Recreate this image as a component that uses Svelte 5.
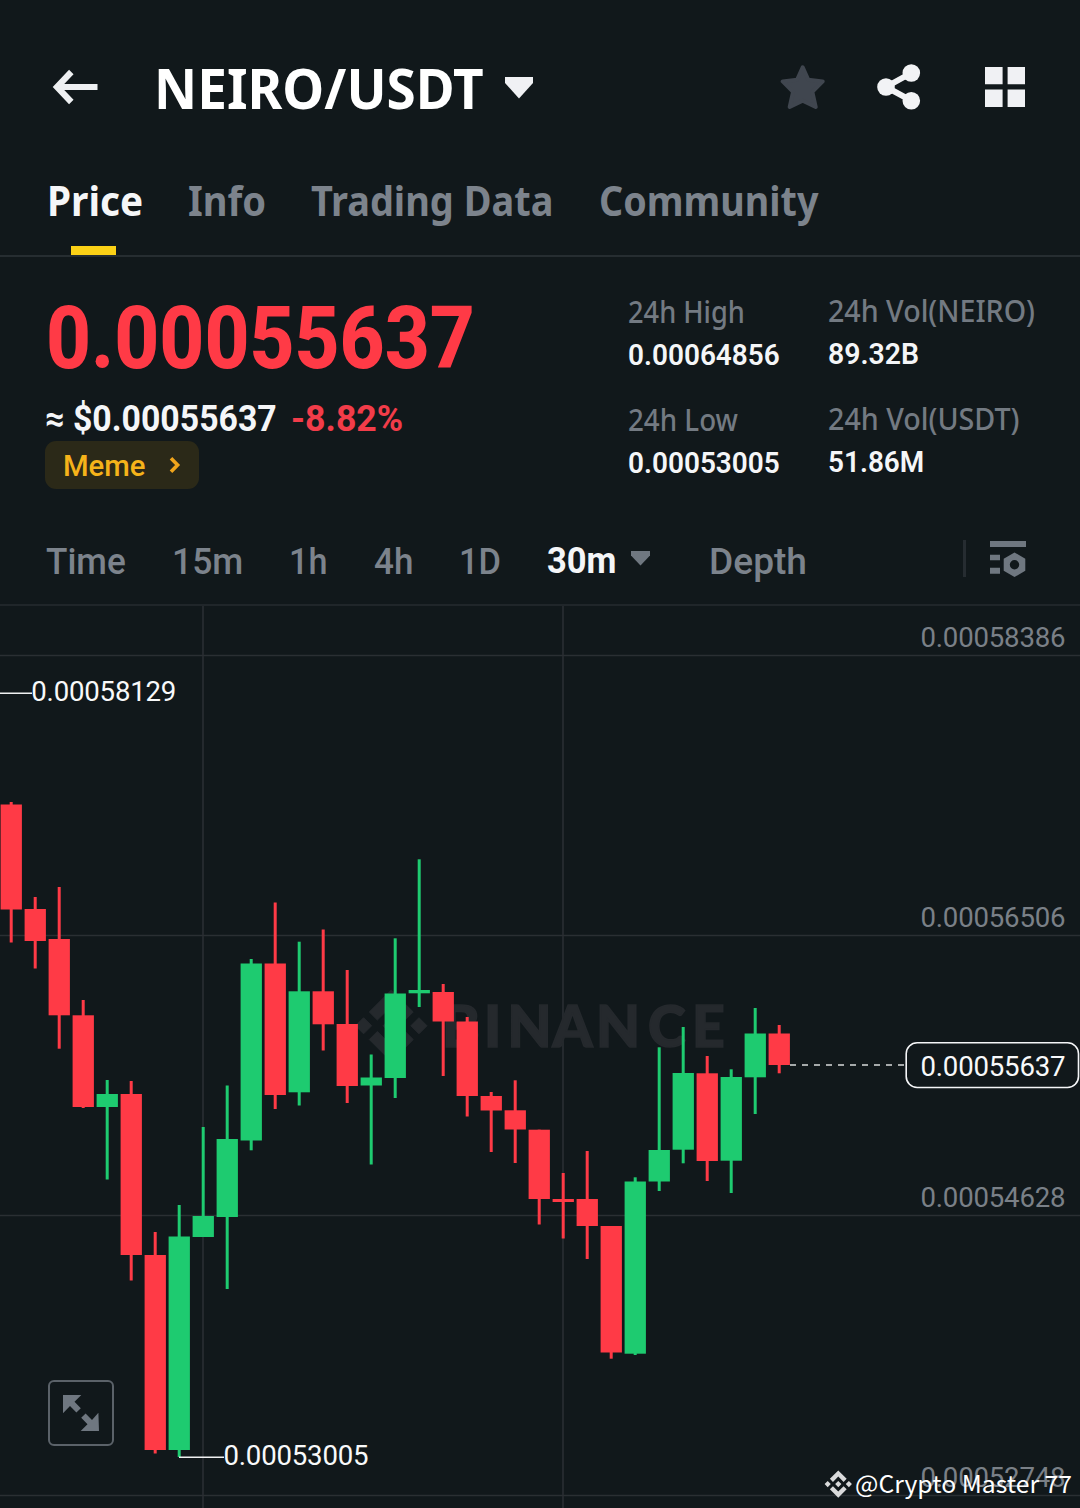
<script lang="ts">
  type Candle = [string, number, number, number, number];

  const tabs = [
    { label: 'Price', width: 96 },
    { label: 'Info', width: 78 },
    { label: 'Trading Data', width: 242 },
    { label: 'Community', width: 219 }
  ];

  const stats = [
    { label: '24h High', width: 117, value: '0.00064856', valueWidth: 152 },
    { label: '24h Vol(NEIRO)', width: 207, value: '89.32B', valueWidth: 91 },
    { label: '24h Low', width: 110, value: '0.00053005', valueWidth: 152 },
    { label: '24h Vol(USDT)', width: 191, value: '51.86M', valueWidth: 96 }
  ];

  const intervals = [
    { label: 'Time', width: 80 },
    { label: '15m', width: 71 },
    { label: '1h', width: 38 },
    { label: '4h', width: 39 },
    { label: '1D', width: 42 }
  ];

  const levels = [
    { price: '0.00058386', y: 655.5 },
    { price: '0.00056506', y: 935.5 },
    { price: '0.00054628', y: 1215.5 },
    { price: '0.00052748', y: 1495.5 }
  ];

  // direction, high, body top, body bottom, low
  const candles: Candle[] = [
    ['down', 802, 804.5, 909.5, 942.5],
    ['down', 897, 909, 941, 968.5],
    ['down', 887, 939, 1015.3, 1048.7],
    ['down', 1000, 1015.3, 1107, 1108],
    ['up', 1080, 1094, 1107, 1179.5],
    ['down', 1081, 1094, 1255, 1280.5],
    ['down', 1232, 1255, 1450, 1453.5],
    ['up', 1205, 1236.5, 1450, 1457],
    ['up', 1127, 1216, 1237, 1237],
    ['up', 1085.5, 1139, 1217, 1289],
    ['up', 959, 963.5, 1140.5, 1150.3],
    ['down', 902.5, 963.5, 1095, 1109],
    ['up', 941.7, 991.3, 1092.3, 1105.5],
    ['down', 929.5, 991.3, 1024.3, 1050.5],
    ['down', 970, 1024, 1086, 1103],
    ['up', 1054.5, 1077.5, 1085.5, 1164.5],
    ['up', 938.3, 993.5, 1078, 1098],
    ['up', 859.3, 990, 993.3, 1007],
    ['down', 984, 992, 1021.5, 1076],
    ['down', 1017, 1021.5, 1096, 1116.5],
    ['down', 1092, 1096, 1110.5, 1152],
    ['down', 1080.3, 1110.3, 1129.5, 1163],
    ['down', 1129.7, 1129.7, 1199, 1224.5],
    ['down', 1173, 1199, 1202, 1238.5],
    ['down', 1151, 1199, 1226, 1259],
    ['down', 1226, 1226, 1352.5, 1358.7],
    ['up', 1177.3, 1181.5, 1353.7, 1355],
    ['up', 1047.3, 1150, 1181.5, 1191],
    ['up', 1027, 1073, 1149.7, 1163.3],
    ['down', 1056, 1073.3, 1161, 1181],
    ['up', 1069.3, 1077, 1160.7, 1193],
    ['up', 1008, 1033.5, 1077.3, 1114],
    ['down', 1025, 1033.5, 1065, 1073.3]
  ];

  const logo =
    'M38.7 53.2L63.3 28.6l24.6 24.6 14.3-14.3L63.3 0 24.4 38.9zM0 63.3L14.3 49l14.3 14.3-14.3 14.3zM38.7 73.4L63.3 98l24.6-24.6 14.3 14.3-38.9 38.9-38.9-38.9zM98 63.3L112.3 49l14.3 14.3-14.3 14.3zM77.8 63.3L63.3 48.8 48.8 63.3l14.5 14.5z';

  // squeeze a label horizontally so that it takes exactly `width` px in the row
  function fit(node: HTMLElement, width: number) {
    const natural = node.offsetWidth;
    node.style.transform = `scaleX(${width / natural})`;
    node.style.marginRight = `${width - natural}px`;
  }
</script>

<div class="screen">
  <header class="topbar">
    <svg class="back" width="46" height="36" viewBox="0 0 46 36">
      <path d="M19.3 3L5 18l14.3 15M5 18h40.5" />
    </svg>
    <h1 class="fit" use:fit={330}>NEIRO/USDT</h1>
    <svg class="caret" width="28" height="22" viewBox="0 0 28 22">
      <path d="M0 0h28v6L14 21.5 0 6z" />
    </svg>
    <div class="actions">
      <svg class="star" width="46" height="46" viewBox="0 0 46 46">
        <path d="M22.7 3.4l5.6 12.4 14.4 1.6-10.4 10.4 3.4 15.2-13-6.2-13 6.2 3.4-15.2L2.7 17.4l14.4-1.6z" />
      </svg>
      <svg class="share" width="44" height="46" viewBox="0 0 44 46">
        <path d="M34.3 9L9 23l25.3 13.7" />
        <circle cx="9" cy="23" r="8.8" />
        <circle cx="34.3" cy="9" r="8.8" />
        <circle cx="34.3" cy="36.7" r="8.8" />
      </svg>
      <svg class="grid" width="40" height="40" viewBox="0 0 40 40">
        <path d="M0 0h17.6v17.3H0zM22.6 0H40v17.3H22.6zM0 22.5h17.6V40H0zM22.6 22.5H40V40H22.6z" />
      </svg>
    </div>
  </header>

  <nav class="tabs">
    {#each tabs as tab, i}
      <div class="tab" class:active={i === 0}>
        <span class="fit" use:fit={tab.width}>{tab.label}</span>
      </div>
    {/each}
  </nav>

  <section class="summary">
    <div class="quote">
      <div class="price"><span class="fit" use:fit={429}>0.00055637</span></div>
      <div class="fiat">
        <span class="fit" use:fit={232}>≈ $0.00055637</span>
        <span class="fit change" use:fit={112}>-8.82%</span>
      </div>
      <div class="tag">
        <span class="fit" use:fit={83}>Meme</span>
        <svg width="12" height="18" viewBox="0 0 12 18">
          <path d="M2 2.2L8.6 9 2 15.8" />
        </svg>
      </div>
    </div>
    <div class="stats">
      {#each stats as stat}
        <div class="stat">
          <div class="label"><span class="fit" use:fit={stat.width}>{stat.label}</span></div>
          <div class="value"><span class="fit" use:fit={stat.valueWidth}>{stat.value}</span></div>
        </div>
      {/each}
    </div>
  </section>

  <div class="intervals">
    {#each intervals as item}
      <span class="fit" use:fit={item.width}>{item.label}</span>
    {/each}
    <div class="selected">
      <span class="fit" use:fit={70}>30m</span>
      <svg width="19" height="15" viewBox="0 0 19 15"><path d="M0 0h19v4.5L9.5 14.5 0 4.5z" /></svg>
    </div>
    <span class="fit depth" use:fit={98}>Depth</span>
    <div class="settings">
      <svg width="36" height="37" viewBox="0 0 36 37">
        <path d="M0 1h36v6H0zM0 14.7h10v5.6H0zM0 27.7h10v6H0z" />
        <path fill-rule="evenodd" d="M24.5 12.5l10.8 6.2v12L24.5 37l-10.8-6.3v-12zM24.5 20a4.7 4.7 0 1 0 0 9.4 4.7 4.7 0 0 0 0-9.4z" />
      </svg>
    </div>
  </div>

  <div class="chart">
    <svg width="1080" height="902" viewBox="0 606 1080 902">
      <g class="gridlines">
        <path d="M203 606V1508M563 606V1508" />
        {#each levels as level}
          <path d="M0 {level.y}H1080" />
        {/each}
      </g>

      <g class="watermark">
        <path transform="translate(355.5 990) scale(0.565)" d={logo} />
        <text x="442 484 507.5 552.5 596 648 692" y="1046.5">BINANCE</text>
      </g>

      {#each levels as level}
        <text class="axis" x="920.5" y={level.y - 8.7} textLength="145">{level.price}</text>
      {/each}

      {#each candles as [dir, high, top, bottom, low], i}
        <g class={dir}>
          <rect x={9.7 + i * 24} y={high} width="3" height={low - high} />
          <rect x={0.6 + i * 24} y={top} width="21.3" height={bottom - top} />
        </g>
      {/each}

      <path class="leader" d="M0 693.3H32M179 1457.2H224" />
      <text class="mark" x="31.3" y="700.7" textLength="145">0.00058129</text>
      <text class="mark" x="223.5" y="1464.7" textLength="145">0.00053005</text>

      <path class="last" d="M790 1065H905" />
      <rect class="bubble" x="906.2" y="1042.8" width="172.3" height="44.7" rx="11" />
      <text class="mark" x="920.5" y="1076" textLength="145">0.00055637</text>

      <g class="author">
        <path transform="translate(824.6 1470.4) scale(0.216)" d={logo} />
        <text x="855" y="1493" textLength="217" lengthAdjust="spacingAndGlyphs">@Crypto Master 77</text>
      </g>
    </svg>
    <div class="expand">
      <svg width="38" height="38" viewBox="0 0 38 38">
        <path d="M1 1h18.3l-6.8 6.8 6.3 6.4-4.4 4.3-6.4-6.4L1 19.2zM37 37H18.7l6.8-6.8-6.3-6.4 4.4-4.3 6.4 6.4 6.4-7.1z" />
      </svg>
    </div>
  </div>
</div>

<style>
  :global(body) {
    margin: 0;
    background: #11181b;
  }

  .screen {
    width: 1080px;
    height: 1508px;
    overflow: hidden;
    background: #11181b;
    color: #f5f6f8;
    font-family: Roboto, sans-serif;
  }

  .fit {
    display: inline-block;
    flex: none;
    white-space: nowrap;
    transform-origin: 0 50%;
  }

  svg {
    display: block;
    flex: none;
  }

  .topbar {
    display: flex;
    align-items: center;
    box-sizing: border-box;
    height: 174px;
    padding: 0 55px 0 52px;
  }

  .back path {
    fill: none;
    stroke: #eef0f2;
    stroke-width: 6.2;
  }

  h1 {
    margin: 2px 0 0 56px;
    font: 700 55.5px/80px 'Noto Sans', sans-serif;
    color: #fff;
  }

  .caret {
    margin: 2px 0 0 21px;
    fill: #f0f1f4;
  }

  .actions {
    display: flex;
    align-items: center;
    margin-left: auto;
  }

  .star {
    fill: #40464f;
    stroke: #40464f;
    stroke-width: 4;
    stroke-linejoin: round;
  }

  .share {
    margin-left: 51px;
    fill: #f2f3f5;
  }

  .share path {
    fill: none;
    stroke: #f2f3f5;
    stroke-width: 6;
  }

  .grid {
    margin-left: 64px;
    fill: #f0f1f4;
  }

  .tabs {
    display: flex;
    gap: 45px;
    box-sizing: border-box;
    height: 83px;
    padding-left: 47px;
    border-bottom: 2px solid #262d31;
    font: 700 42px/51px 'Noto Sans', sans-serif;
    color: #7c838c;
  }

  .tab {
    display: flex;
    flex-direction: column;
    align-items: center;
    height: 81px;
  }

  .active {
    color: #f5f6f8;
  }

  .active::after {
    content: '';
    width: 45px;
    height: 9px;
    margin: auto 4px 0 0;
    background: #fcd116;
  }

  .summary {
    display: flex;
    justify-content: space-between;
    box-sizing: border-box;
    height: 263px;
    padding: 36px 45px 0 45px;
  }

  .price {
    padding-left: 1px;
    font-size: 88px;
    line-height: 90px;
    font-weight: 800;
    color: #ff3a46;
  }

  .fiat {
    display: flex;
    gap: 14px;
    height: 58px;
    font-size: 36px;
    line-height: 72px;
    font-weight: 700;
  }

  .change {
    color: #f23c49;
  }

  .tag {
    display: flex;
    align-items: center;
    gap: 23px;
    box-sizing: border-box;
    width: 154px;
    height: 48px;
    padding-left: 18px;
    border-radius: 11px;
    background: #2b2918;
    color: #f5b31a;
    font-size: 30px;
    font-weight: 500;
  }

  .tag path {
    fill: none;
    stroke: #f0a51c;
    stroke-width: 3.6;
  }

  .stats {
    display: grid;
    grid-template-columns: 200px 207px;
    grid-auto-rows: 108px;
  }

  .stat:nth-child(even) {
    margin-top: -1px;
  }

  .label {
    font: 500 30px/38px 'Noto Sans', sans-serif;
    color: #737a82;
  }

  .value {
    font-size: 30px;
    line-height: 47px;
    font-weight: 600;
  }

  .intervals {
    display: flex;
    align-items: center;
    gap: 46px;
    box-sizing: border-box;
    height: 86px;
    padding: 0 54px 0 46px;
    border-bottom: 2px solid #20262a;
    color: #7c838c;
    font-size: 36px;
    font-weight: 500;
  }

  .selected {
    display: flex;
    align-items: center;
    gap: 15px;
    margin: -2px 0 0;
    color: #f5f6f8;
    font-weight: 700;
  }

  .selected svg,
  .settings svg {
    fill: #6f7780;
  }

  .selected svg {
    margin-top: -5px;
  }

  .depth {
    margin-left: 13px;
  }

  .settings {
    margin: -8px 0 0 auto;
    padding-left: 24px;
    border-left: 3px solid #262c31;
  }

  .chart {
    position: relative;
    height: 902px;
  }

  .gridlines path {
    stroke: #2a2f33;
    stroke-width: 1.6;
  }

  .watermark {
    fill: #25292d;
    stroke: #25292d;
    stroke-width: 1.6;
    font: 900 57px Lato, sans-serif;
  }

  .axis {
    fill: #7a8087;
    font-size: 27.6px;
  }

  .mark {
    fill: #f8f9fa;
    font-size: 27.6px;
  }

  .up {
    fill: #1ecb70;
  }

  .down {
    fill: #ff3a46;
  }

  .leader {
    stroke: #f0f1f2;
    stroke-width: 1.6;
  }

  .last {
    stroke: #d8dadc;
    stroke-width: 1.7;
    stroke-dasharray: 6 6;
  }

  .bubble {
    fill: #11181b;
    stroke: #f5f6f8;
    stroke-width: 1.6;
  }

  .author path {
    fill: #d9dadb;
  }

  .author text {
    fill: #fff;
    font: 400 24px 'Noto Sans CJK SC', sans-serif;
  }

  .expand {
    position: absolute;
    left: 48px;
    bottom: 62px;
    display: flex;
    align-items: center;
    justify-content: center;
    box-sizing: border-box;
    width: 66px;
    height: 66px;
    border: 2px solid #5b6269;
    border-radius: 6px;
    fill: #6f7780;
  }
</style>
